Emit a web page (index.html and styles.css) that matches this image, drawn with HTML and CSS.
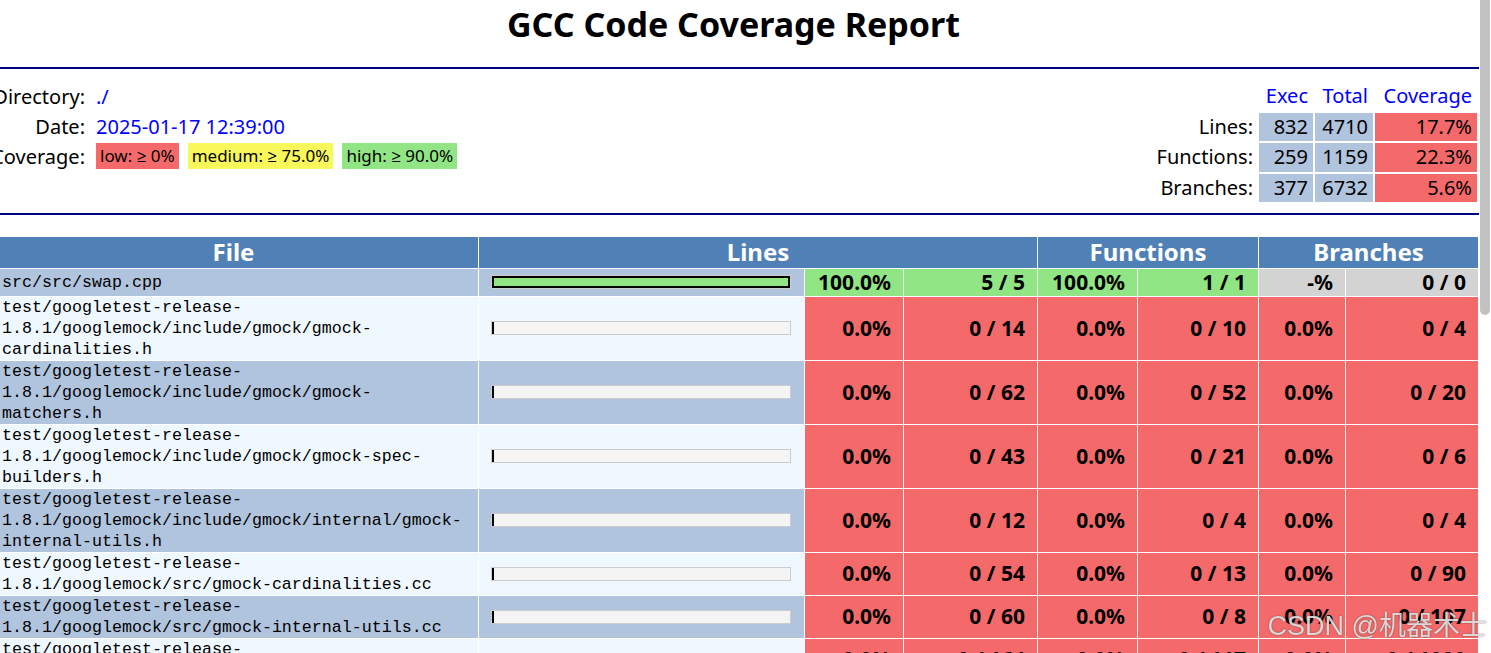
FILE: index.html
```html
<!DOCTYPE html>
<html lang="en">
<head>
<meta charset="utf-8">
<title>GCC Code Coverage Report</title>
<link rel="stylesheet" href="styles.css">
</head>
<body>
<div class="viewport">
  <div class="page">
    <h1 class="title">GCC Code Coverage Report</h1>
    <hr class="rule rule-top">
    <div class="summary">
      <div class="info">
        <div class="info-label">Directory:</div>
        <div class="info-value link">./</div>
        <div class="info-label">Date:</div>
        <div class="info-value link">2025-01-17 12:39:00</div>
        <div class="info-label">Coverage:</div>
        <div class="info-value legend">
          <span class="legend-item coverage-low">low: ≥ 0%</span>
          <span class="legend-item coverage-medium">medium: ≥ 75.0%</span>
          <span class="legend-item coverage-high">high: ≥ 90.0%</span>
        </div>
      </div>
      <table class="totals">
        <tr>
          <th class="totals-label"></th>
          <th class="totals-head">Exec</th>
          <th class="totals-head">Total</th>
          <th class="totals-head">Coverage</th>
        </tr>
        <tr>
          <th class="totals-label">Lines:</th>
          <td class="totals-num">832</td>
          <td class="totals-num">4710</td>
          <td class="totals-num coverage-low">17.7%</td>
        </tr>
        <tr>
          <th class="totals-label">Functions:</th>
          <td class="totals-num">259</td>
          <td class="totals-num">1159</td>
          <td class="totals-num coverage-low">22.3%</td>
        </tr>
        <tr>
          <th class="totals-label">Branches:</th>
          <td class="totals-num">377</td>
          <td class="totals-num">6732</td>
          <td class="totals-num coverage-low">5.6%</td>
        </tr>
      </table>
    </div>
    <hr class="rule rule-bottom">
    <table class="files">
      <colgroup>
        <col class="col-file">
        <col class="col-bar">
        <col class="col-lp">
        <col class="col-ln">
        <col class="col-fp">
        <col class="col-fn">
        <col class="col-bp">
        <col class="col-bn">
      </colgroup>
      <thead>
        <tr>
          <th class="head">File</th>
          <th class="head" colspan="3">Lines</th>
          <th class="head" colspan="2">Functions</th>
          <th class="head" colspan="2">Branches</th>
        </tr>
      </thead>
      <tbody>
        <tr class="row-a">
          <td class="file">src/src/swap.cpp</td>
          <td class="barcell"><div class="bar"><div class="bar-fill fill-high" style="width:100%"></div></div></td>
          <td class="num coverage-high">100.0%</td>
          <td class="num coverage-high">5 / 5</td>
          <td class="num coverage-high">100.0%</td>
          <td class="num coverage-high">1 / 1</td>
          <td class="num coverage-none">-%</td>
          <td class="num coverage-none">0 / 0</td>
        </tr>
        <tr class="row-b">
          <td class="file">test/googletest-release-1.8.1/googlemock/include/gmock/gmock-cardinalities.h</td>
          <td class="barcell"><div class="bar"><div class="bar-fill fill-zero"></div></div></td>
          <td class="num coverage-low">0.0%</td>
          <td class="num coverage-low">0 / 14</td>
          <td class="num coverage-low">0.0%</td>
          <td class="num coverage-low">0 / 10</td>
          <td class="num coverage-low">0.0%</td>
          <td class="num coverage-low">0 / 4</td>
        </tr>
        <tr class="row-a">
          <td class="file">test/googletest-release-1.8.1/googlemock/include/gmock/gmock-matchers.h</td>
          <td class="barcell"><div class="bar"><div class="bar-fill fill-zero"></div></div></td>
          <td class="num coverage-low">0.0%</td>
          <td class="num coverage-low">0 / 62</td>
          <td class="num coverage-low">0.0%</td>
          <td class="num coverage-low">0 / 52</td>
          <td class="num coverage-low">0.0%</td>
          <td class="num coverage-low">0 / 20</td>
        </tr>
        <tr class="row-b">
          <td class="file">test/googletest-release-1.8.1/googlemock/include/gmock/gmock-spec-builders.h</td>
          <td class="barcell"><div class="bar"><div class="bar-fill fill-zero"></div></div></td>
          <td class="num coverage-low">0.0%</td>
          <td class="num coverage-low">0 / 43</td>
          <td class="num coverage-low">0.0%</td>
          <td class="num coverage-low">0 / 21</td>
          <td class="num coverage-low">0.0%</td>
          <td class="num coverage-low">0 / 6</td>
        </tr>
        <tr class="row-a">
          <td class="file">test/googletest-release-1.8.1/googlemock/include/gmock/internal/gmock-internal-utils.h</td>
          <td class="barcell"><div class="bar"><div class="bar-fill fill-zero"></div></div></td>
          <td class="num coverage-low">0.0%</td>
          <td class="num coverage-low">0 / 12</td>
          <td class="num coverage-low">0.0%</td>
          <td class="num coverage-low">0 / 4</td>
          <td class="num coverage-low">0.0%</td>
          <td class="num coverage-low">0 / 4</td>
        </tr>
        <tr class="row-b">
          <td class="file">test/googletest-release-1.8.1/googlemock/src/gmock-cardinalities.cc</td>
          <td class="barcell"><div class="bar"><div class="bar-fill fill-zero"></div></div></td>
          <td class="num coverage-low">0.0%</td>
          <td class="num coverage-low">0 / 54</td>
          <td class="num coverage-low">0.0%</td>
          <td class="num coverage-low">0 / 13</td>
          <td class="num coverage-low">0.0%</td>
          <td class="num coverage-low">0 / 90</td>
        </tr>
        <tr class="row-a">
          <td class="file">test/googletest-release-1.8.1/googlemock/src/gmock-internal-utils.cc</td>
          <td class="barcell"><div class="bar"><div class="bar-fill fill-zero"></div></div></td>
          <td class="num coverage-low">0.0%</td>
          <td class="num coverage-low">0 / 60</td>
          <td class="num coverage-low">0.0%</td>
          <td class="num coverage-low">0 / 8</td>
          <td class="num coverage-low">0.0%</td>
          <td class="num coverage-low">0 / 107</td>
        </tr>
        <tr class="row-b">
          <td class="file">test/googletest-release-1.8.1/googlemock/src/gmock-spec-builders.cc</td>
          <td class="barcell"><div class="bar"><div class="bar-fill fill-zero"></div></div></td>
          <td class="num coverage-low">0.0%</td>
          <td class="num coverage-low">0 / 164</td>
          <td class="num coverage-low">0.0%</td>
          <td class="num coverage-low">0 / 117</td>
          <td class="num coverage-low">0.0%</td>
          <td class="num coverage-low">0 / 1000</td>
        </tr>
      </tbody>
    </table>
  </div>
  <div class="scrollbar"><div class="scrollbar-thumb"></div></div>
</div>
<div class="watermark">CSDN @机器术士</div>
</body>
</html>
```

FILE: styles.css
```css
html, body {
  margin: 0;
  padding: 0;
  height: 100%;
  overflow: hidden;
  background: #ffffff;
}

body {
  font-family: "Noto Sans", "Open Sans", sans-serif;
  color: #000000;
}

.viewport {
  display: flex;
  height: 100%;
  overflow: hidden;
}

.page {
  flex: 0 0 1491px;
  width: 1491px;
  margin-left: -12px;
}

.scrollbar {
  flex: 0 0 12px;
  background: #ffffff;
  display: flex;
  justify-content: center;
}

.scrollbar-thumb {
  width: 10px;
  height: 315px;
  background: #c2c2c2;
  border-radius: 0 0 5px 5px;
}

.title {
  margin: 0;
  font-size: 34px;
  line-height: 48px;
  font-weight: 700;
  text-align: center;
}

.rule {
  margin: 0;
  border: 0;
  height: 2px;
  background: #000080;
}

.rule-top {
  margin-top: 19px;
}

.rule-bottom {
  margin-top: 9px;
}

.summary {
  display: flex;
  justify-content: space-between;
  align-items: flex-start;
  margin-top: 11px;
}

.info {
  display: grid;
  grid-template-columns: 97px auto;
  grid-auto-rows: 30px;
  column-gap: 11px;
  align-items: center;
  margin-top: 1px;
  font-size: 20px;
}

.info-label {
  text-align: right;
  white-space: nowrap;
}

.link {
  color: #0000ff;
}

.legend {
  display: flex;
  gap: 9px;
}

.legend-item {
  font-size: 17px;
  line-height: 26px;
  padding: 0 4px;
  color: #000;
}

.totals {
  border-collapse: separate;
  border-spacing: 2px;
  font-size: 20px;
}

.totals th, .totals td {
  padding: 0 5px;
  line-height: 28.5px;
  font-weight: 400;
  text-align: right;
  white-space: nowrap;
}

.totals .totals-label {
  padding: 0 4px 0 0;
}

.totals-head {
  color: #0000ff;
}

.totals-num {
  background: #b0c4de;
}

.totals td:nth-child(2) { width: 44px; }
.totals td:nth-child(3) { width: 48px; }
.totals td:nth-child(4) { width: 92px; }

.coverage-low { background: #f46a6a; }
.coverage-medium { background: #f8f85a; }
.coverage-high { background: #91e584; }
.coverage-none { background: #d3d3d3; }

.totals td.coverage-low { background: #f46a6a; }

.files {
  margin-top: 21px;
  width: 1491px;
  table-layout: fixed;
  border-collapse: separate;
  border-spacing: 1px;
}

.col-file { width: 489px; }
.col-bar { width: 325px; }
.col-lp { width: 98px; }
.col-ln { width: 133px; }
.col-fp { width: 99px; }
.col-fn { width: 120px; }
.col-bp { width: 86px; }
.col-bn { width: 132px; }

.head {
  background: #4f81b6;
  color: #ffffff;
  font-size: 24px;
  font-weight: 700;
  line-height: 30.6px;
  padding: 0;
  text-align: center;
}

.row-a .file, .row-a .barcell { background: #b0c4de; }
.row-b .file, .row-b .barcell { background: #f0f8ff; }

.file {
  font-family: "Liberation Mono", "DejaVu Sans Mono", monospace;
  font-size: 16.667px;
  line-height: 21px;
  padding: 0 10px 0 13px;
  vertical-align: middle;
}

.barcell {
  padding: 0 0 0 12px;
  vertical-align: middle;
}

.bar {
  width: 298px;
  height: 12px;
  border: 1px solid #cccccc;
  background: #f4f4f4;
  display: flex;
}

.bar-fill {
  height: 100%;
  box-sizing: border-box;
}

.fill-high {
  background: #91e584;
  border: 2px solid #000000;
}

.fill-zero {
  width: 0;
  border-left: 2px solid #000000;
}

.num {
  font-size: 21px;
  font-weight: 700;
  line-height: 27px;
  padding: 0 12px 0 0;
  text-align: right;
  vertical-align: middle;
  white-space: nowrap;
}

.watermark {
  position: fixed;
  right: 4px;
  bottom: 10px;
  font-family: "Liberation Sans", "Noto Sans CJK SC", sans-serif;
  font-size: 27px;
  line-height: 34px;
  color: rgba(255, 255, 255, 0.78);
  text-shadow: 0 0 1px rgba(60, 60, 60, 0.7), 0 0 2px rgba(60, 60, 60, 0.4);
  pointer-events: none;
}
```
